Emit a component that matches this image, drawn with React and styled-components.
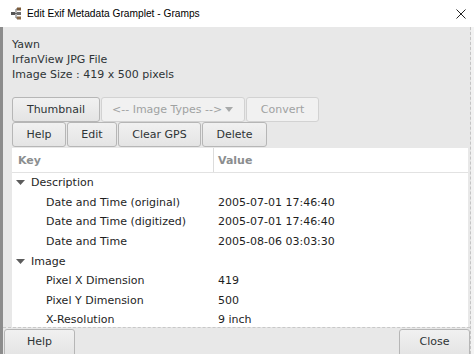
import styled, { createGlobalStyle } from "styled-components";

const GlobalStyle = createGlobalStyle`
  html, body {
    margin: 0;
    padding: 0;
  }
  body {
    width: 474px;
    height: 354px;
    overflow: hidden;
    background: #f2f2f2;
  }
`;

const Window = styled.div`
  width: 474px;
  height: 354px;
  display: flex;
  flex-direction: column;
  overflow: hidden;
  background: #f3f3f3;
  font-family: "DejaVu Sans", sans-serif;
  font-size: 11px;
  color: #2e3436;
`;

const TitleBar = styled.div`
  height: 27px;
  flex: none;
  display: flex;
  align-items: center;
  gap: 4px;
  padding: 0 8px 0 10px;
  box-sizing: border-box;
  background: #fff;
`;

const Title = styled.span`
  flex: 1;
  font-family: "Liberation Sans", Arial, sans-serif;
  font-size: 10.2px;
  color: #000;
`;

const Body = styled.div`
  flex: 1;
  min-height: 0;
  display: flex;
  flex-direction: column;
  margin-right: 3px;
  background: #e8e8e8;
  border-left: 3px solid #8c8c8c;
  border-right: 1px dashed #c4c4c4;
`;

const Info = styled.div`
  padding: 10px 0 0 9px;
  line-height: 15px;
`;

const ButtonRows = styled.div`
  margin: 15px 0 0 9px;
  display: flex;
  flex-direction: column;
`;

const ButtonRow = styled.div`
  display: flex;
  gap: 1px;
`;

const Button = styled.button`
  width: ${(props) => props.width}px;
  height: ${(props) => props.height || 25}px;
  flex: none;
  display: flex;
  align-items: ${(props) => (props.height ? "flex-start" : "center")};
  justify-content: ${(props) => (props.combo ? "space-between" : "center")};
  padding: ${(props) =>
    props.combo ? "0 11px 0 10px" : props.height ? "5px 0 0" : "0"};
  box-sizing: border-box;
  font-family: "DejaVu Sans", sans-serif;
  font-size: 11px;
  line-height: 13px;
  color: ${(props) => (props.disabled ? "#a0a2a2" : "#2e3436")};
  background: ${(props) =>
    props.disabled ? "#f1f1f1" : "linear-gradient(#f1f1f1, #e4e4e4)"};
  border: 1px solid ${(props) => (props.disabled ? "#d2d2d2" : "#b6b6b6")};
  border-radius: 3px;
`;

const Tree = styled.div`
  flex: 1;
  min-height: 0;
  margin: 1px 2px 0 9px;
  background: #fff;
  overflow: hidden;
`;

const Header = styled.div`
  display: grid;
  grid-template-columns: 201px 1fr;
  height: 24px;
  border-bottom: 1px solid #e2e2e2;
  color: #8b8e8f;
  font-weight: bold;
`;

const HeaderCell = styled.div`
  display: flex;
  align-items: center;
  padding-left: ${(props) => (props.first ? 6 : 4)}px;
  border-left: ${(props) => (props.first ? "none" : "1px solid #dcdcdc")};
`;

const Row = styled.div`
  display: grid;
  grid-template-columns: 201px 1fr;
  height: 19.6px;
  align-items: center;
  color: #1e1e1e;
`;

const KeyCell = styled.div`
  display: flex;
  align-items: center;
  gap: 6px;
  padding-left: ${(props) => (props.group ? 4 : 34)}px;
  white-space: nowrap;
`;

const ValueCell = styled.div`
  padding-left: 5px;
  white-space: nowrap;
`;

const ActionBar = styled.div`
  height: 27px;
  flex: none;
  display: flex;
  justify-content: space-between;
  align-items: flex-start;
  padding: 1px 0 0 1px;
  box-sizing: border-box;
  border-top: 1px dashed #c8c8c8;
`;

const AppIcon = () => (
  <svg width="13" height="13" viewBox="0 0 13 13">
    <rect x="7" y="0.5" width="4" height="3" fill="#7a5a3a" />
    <rect x="7" y="5" width="4" height="3" fill="#6c6c6c" />
    <rect x="7" y="9.5" width="4" height="3" fill="#8a6a48" />
    <rect x="1" y="5" width="4" height="3" fill="#555" />
    <path d="M5 6.5 H6 V2 H7 M6 6.5 H7 M6 6.5 V11 H7" stroke="#666" fill="none" />
  </svg>
);

const CloseIcon = () => (
  <svg width="10" height="10" viewBox="0 0 10 10">
    <path d="M0.5 0.5 L9.5 9.5 M9.5 0.5 L0.5 9.5" stroke="#222" strokeWidth="1" />
  </svg>
);

const Expander = () => (
  <svg width="9" height="5" viewBox="0 0 9 5">
    <polygon points="0,0 9,0 4.5,5" fill="#5c5c5c" />
  </svg>
);

const ComboArrow = () => (
  <svg width="8" height="5" viewBox="0 0 8 5">
    <polygon points="0,0 8,0 4,5" fill="#a8aaaa" />
  </svg>
);

const groups = [
  {
    name: "Description",
    rows: [
      ["Date and Time (original)", "2005-07-01 17:46:40"],
      ["Date and Time (digitized)", "2005-07-01 17:46:40"],
      ["Date and Time", "2005-08-06 03:03:30"],
    ],
  },
  {
    name: "Image",
    rows: [
      ["Pixel X Dimension", "419"],
      ["Pixel Y Dimension", "500"],
      ["X-Resolution", "9 inch"],
    ],
  },
];

const App = () => {
  return (
    <>
      <GlobalStyle />
      <Window>
        <TitleBar>
          <AppIcon />
          <Title>Edit Exif Metadata Gramplet - Gramps</Title>
          <CloseIcon />
        </TitleBar>
        <Body>
          <Info>
            <div>Yawn</div>
            <div>IrfanView JPG File</div>
            <div>Image Size : 419 x 500 pixels</div>
          </Info>
          <ButtonRows>
            <ButtonRow>
              <Button width={88}>Thumbnail</Button>
              <Button width={144} combo disabled>
                <span>&lt;-- Image Types --&gt;</span>
                <ComboArrow />
              </Button>
              <Button width={73} disabled>Convert</Button>
            </ButtonRow>
            <ButtonRow>
              <Button width={54}>Help</Button>
              <Button width={50}>Edit</Button>
              <Button width={83}>Clear GPS</Button>
              <Button width={65}>Delete</Button>
            </ButtonRow>
          </ButtonRows>
          <Tree>
            <Header>
              <HeaderCell first>Key</HeaderCell>
              <HeaderCell>Value</HeaderCell>
            </Header>
            {groups.map((g) => (
              <div key={g.name}>
                <Row>
                  <KeyCell group>
                    <Expander />
                    {g.name}
                  </KeyCell>
                  <ValueCell />
                </Row>
                {g.rows.map(([k, v]) => (
                  <Row key={k}>
                    <KeyCell>{k}</KeyCell>
                    <ValueCell>{v}</ValueCell>
                  </Row>
                ))}
              </div>
            ))}
          </Tree>
          <ActionBar>
            <Button width={71} height={28}>Help</Button>
            <Button width={71} height={28}>Close</Button>
          </ActionBar>
        </Body>
      </Window>
    </>
  );
};

export default App;
